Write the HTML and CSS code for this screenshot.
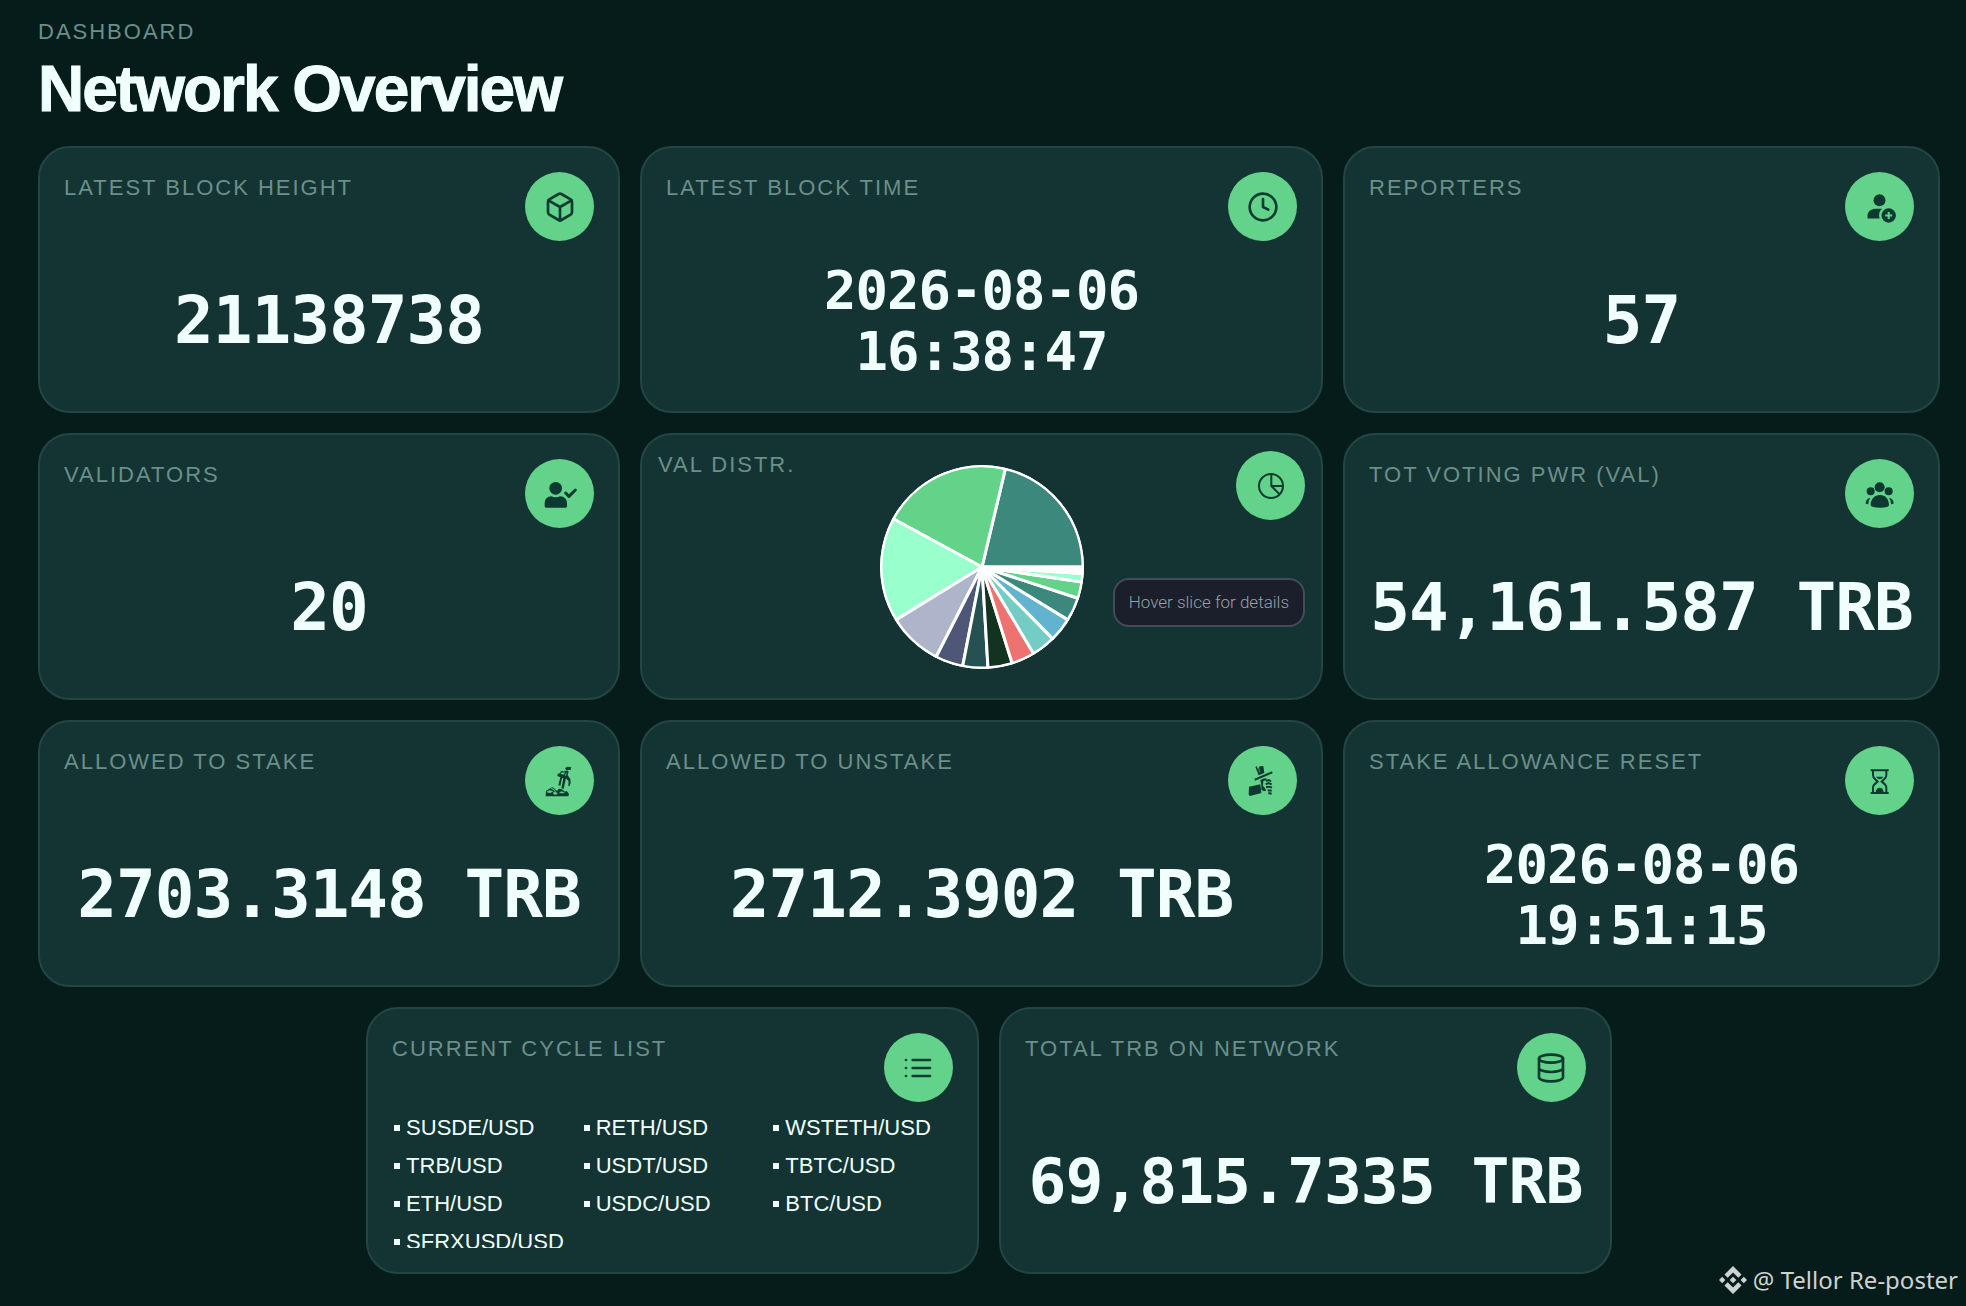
FILE: index.html
```html
<!DOCTYPE html>
<html lang="en">
<head>
<meta charset="utf-8">
<meta name="viewport" content="width=device-width, initial-scale=1">
<title>Network Overview</title>
<link rel="stylesheet" href="styles.css">
</head>
<body>
<main class="page">
  <header class="page-header">
    <p class="label">DASHBOARD</p>
    <h1 class="title">Network Overview</h1>
  </header>

  <div class="grid">
    <section class="card">
      <div class="card-head">
        <h2 class="label">LATEST BLOCK HEIGHT</h2>
        <span class="badge"><svg class="icon line" viewBox="0 0 24 24"><path d="M21 16V8a2 2 0 0 0-1-1.73l-7-4a2 2 0 0 0-2 0l-7 4A2 2 0 0 0 3 8v8a2 2 0 0 0 1 1.73l7 4a2 2 0 0 0 2 0l7-4A2 2 0 0 0 21 16z"/><path d="M3.27 6.96 12 12.01l8.73-5.05M12 22.08V12"/></svg></span>
      </div>
      <p class="value">21138738</p>
    </section>

    <section class="card">
      <div class="card-head">
        <h2 class="label">LATEST BLOCK TIME</h2>
        <span class="badge"><svg class="icon line" viewBox="0 0 24 24"><circle cx="12" cy="12" r="10"/><path d="M12 6v6l4 2"/></svg></span>
      </div>
      <p class="value date">2026-08-06<br>16:38:47</p>
    </section>

    <section class="card">
      <div class="card-head">
        <h2 class="label">REPORTERS</h2>
        <span class="badge"><svg class="icon wide" viewBox="0 0 36 36"><circle cx="17.5" cy="11.2" r="6"/><path d="M5.5 29.5v-3c0-4 4-6.7 9-6.7h5.5a9 9 0 0 0-2.300 9.700z"/><circle cx="26.700" cy="26.500" r="7.200"/><path class="cutout" d="M26.700 23v7M23.200 26.500h7"/></svg></span>
      </div>
      <p class="value">57</p>
    </section>

    <section class="card">
      <div class="card-head">
        <h2 class="label">VALIDATORS</h2>
        <span class="badge"><svg class="icon wide" viewBox="124 106 108 108"><circle cx="165" cy="143" r="19"/><path d="M132 197v-8c0-13 8-22 20-22 8 4 18 4 26 0 13 0 21 9 21 22v8q0 4-4 4h-59q-4 0-4-4z"/><path class="stroke thick" d="m195 157 10 10 19-19"/></svg></span>
      </div>
      <p class="value">20</p>
    </section>

    <section class="card chart-card">
      <div class="card-head">
        <h2 class="label">VAL DISTR.</h2>
        <span class="badge"><svg class="icon wide" viewBox="1209 111 108 108"><g class="stroke"><circle cx="1263" cy="165" r="36"/><path d="M1264 129v36h36M1264 165l25 25"/></g></svg></span>
      </div>
      <svg class="pie" viewBox="0 0 204 204" role="img" aria-label="Validator distribution">
        <defs><clipPath id="disc"><circle cx="102" cy="102" r="102"/></clipPath></defs>
        <g clip-path="url(#disc)">
          <circle cx="102" cy="102" r="102" fill="#fff"/>
          <path fill="#3c887c" d="M102 102L125.400 3.700A101 101 0 0 1 203 102z"/>
          <path fill="#64d38a" d="M102 102L13.200 53.800A101 101 0 0 1 125.400 3.700z"/>
          <path fill="#99ffcc" d="M102 102L16 154.900A101 101 0 0 1 13.200 53.800z"/>
          <path fill="#aeb4c9" d="M102 102L56.100 192A101 101 0 0 1 16 154.900z"/>
          <path fill="#4f5778" d="M102 102L82.700 201.100A101 101 0 0 1 56.100 192z"/>
          <path fill="#265153" d="M102 102L108 202.800A101 101 0 0 1 82.700 201.100z"/>
          <path fill="#12331f" d="M102 102L132.200 198.400A101 101 0 0 1 108 202.800z"/>
          <path fill="#ee726f" d="M102 102L153.700 188.800A101 101 0 0 1 132.200 198.400z"/>
          <path fill="#73cdc4" d="M102 102L172.900 173.900A101 101 0 0 1 153.700 188.800z"/>
          <path fill="#62b3cf" d="M102 102L188 154.900A101 101 0 0 1 172.900 173.900z"/>
          <path fill="#3c887c" d="M102 102L198.100 133.200A101 101 0 0 1 188 154.900z"/>
          <path fill="#64d38a" d="M102 102L201.900 117.100A101 101 0 0 1 198.100 133.200z"/>
          <path fill="#99ffcc" d="M102 102L202.800 108.400A101 101 0 0 1 201.900 117.100z"/>
          <path fill="#fff" d="M102 102L203 102A101 101 0 0 1 202.800 108.400z"/>
        </g>
      </svg>
      <p class="hint">Hover slice for details</p>
    </section>

    <section class="card">
      <div class="card-head">
        <h2 class="label">TOT VOTING PWR (VAL)</h2>
        <span class="badge"><svg class="icon wide" viewBox="124 106 108 108"><circle cx="177" cy="140" r="15"/><circle cx="150" cy="152" r="12"/><circle cx="204" cy="152" r="12"/><path d="M150 193c0-18 12-30 28-30s27 12 27 30q0 3-4 5-22 6-46 0-5-2-5-5zM149 171q-6 8-6 20-8 0-8-3 0-14 14-17zM205 171q6 8 6 20 8 0 8-3 0-14-14-17z"/></svg></span>
      </div>
      <p class="value">54,161.587 TRB</p>
    </section>

    <section class="card">
      <div class="card-head">
        <h2 class="label">ALLOWED TO STAKE</h2>
        <span class="badge"><svg class="icon wide" viewBox="124 97 108 108"><path d="M135 197l1-16 10-7 9-5 8 7 6 5 5-7 10 2 9 7 5-2 7 9-2 7z"/><path class="cut" d="M139 184l8-4 9 2-7 4zM158 186l7-2 5 6-10 1zM177 186l6-3 8 3-8 1zM150 172l8 3 7 9"/><path d="M193 112l8-4 11 2-3 9-6-2-5 4z"/><path d="M191 120l13 2-3 12 8 11 1 12-4 10-3-1 1-14-8-9-7 31-7-1 6-30-4-1-5 24-6-3 6-23-9-4 1-6 7-3 4-7 9 3-1 3-7-1-3 4 9 3z"/><path class="cut" d="M193 123l-3 8M197 127l-3 9"/></svg></span>
      </div>
      <p class="value">2703.3148 TRB</p>
    </section>

    <section class="card">
      <div class="card-head">
        <h2 class="label">ALLOWED TO UNSTAKE</h2>
        <span class="badge"><svg class="icon wide" viewBox="103 97 108 108"><path d="M134 109l4-2 4 8 5-8 11-1 3 21-17 7zM131 144l53-22 2 6-53 22z"/><path d="M115 168l34-7 3 26-34 9-4-4zM152 162l-3-13 8-5 10-1 1 5-10 3-1 15 6 6 3 8-6 2-8-5z"/><path class="cut" d="M144 112l3 13"/><g class="stroke"><path d="M166 151l8-3 7 4M165 161l8-4 10 4M166 170l9-2 9 3M171 179l12 1M173 187l10 2"/></g></svg></span>
      </div>
      <p class="value">2712.3902 TRB</p>
    </section>

    <section class="card">
      <div class="card-head">
        <h2 class="label">STAKE ALLOWANCE RESET</h2>
        <span class="badge"><svg class="icon wide" viewBox="124 97 108 108"><g class="stroke"><path d="M150 119h54M150 187h54M157 120v14c0 10 8 12 14 19-8 6-14 9-14 18v16M197 120v14c0 10-8 12-14 19 8 6 14 9 14 18v16"/></g><path d="M166 138h22q-3 7-11 8-8-1-11-8zM165 186c0-10 6-15 12-15s12 5 12 15z"/></svg></span>
      </div>
      <p class="value date">2026-08-06<br>19:51:15</p>
    </section>
  </div>

  <div class="grid pair">
    <section class="card">
      <div class="card-head">
        <h2 class="label">CURRENT CYCLE LIST</h2>
        <span class="badge"><svg class="icon line" viewBox="0 0 24 24"><path d="M8 6h13M8 12h13M8 18h13M3 6h.01M3 12h.01M3 18h.01"/></svg></span>
      </div>
      <ul class="cycle">
        <li>SUSDE/USD</li><li>RETH/USD</li><li>WSTETH/USD</li>
        <li>TRB/USD</li><li>USDT/USD</li><li>TBTC/USD</li>
        <li>ETH/USD</li><li>USDC/USD</li><li>BTC/USD</li>
        <li>SFRXUSD/USD</li>
      </ul>
    </section>

    <section class="card">
      <div class="card-head">
        <h2 class="label">TOTAL TRB ON NETWORK</h2>
        <span class="badge"><svg class="icon line" viewBox="0 0 24 24"><ellipse cx="12" cy="5" rx="9" ry="3"/><path d="M21 12c0 1.660-4 3-9 3s-9-1.340-9-3M3 5v14c0 1.660 4 3 9 3s9-1.340 9-3V5"/></svg></span>
      </div>
      <p class="value total">69,815.7335 TRB</p>
    </section>
  </div>

  <p class="credit">
    <svg class="credit-logo" viewBox="0 0 28 28"><path d="M14 0l8.500 8.500-3.200 3.200L14 6.400l-5.300 5.300-3.200-3.200zM14 28l8.500-8.500-3.200-3.200L14 21.600l-5.300-5.300-3.200 3.200zM14 10.700l3.300 3.300-3.300 3.300-3.300-3.300zM3.200 10.800L6.400 14l-3.200 3.200L0 14zM24.800 10.800L28 14l-3.200 3.200-3.200-3.200z"/></svg>
    <span>@ Tellor Re-poster</span>
  </p>
</main>
</body>
</html>
```
FILE: styles.css
```css
* {
  box-sizing: border-box;
  margin: 0;
  padding: 0;
}

body {
  background: #061c1a;
  color: #f0fffb;
  font-family: "Liberation Sans", Arial, sans-serif;
}

.page {
  position: relative;
  min-height: 100vh;
  padding: 18px 26px 32px 38px;
}

.page-header {
  display: grid;
  gap: 7px;
  margin-bottom: 21px;
}

.label {
  color: #6b8f8a;
  font-size: 22px;
  font-weight: 400;
  letter-spacing: 2px;
  line-height: 28px;
}

.title {
  font-size: 64px;
  font-weight: 700;
  letter-spacing: -2px;
  line-height: 72px;
  -webkit-text-stroke: 1px currentColor;
}

.grid {
  display: grid;
  grid-template-columns: 582fr 683fr 597fr;
  gap: 20px;
}

.pair {
  grid-template-columns: 1fr 1fr;
  width: 65.5%;
  margin: 20px auto 0;
}

.card {
  position: relative;
  display: flex;
  flex-direction: column;
  gap: 10px;
  min-width: 0;
  min-height: 267px;
  padding: 24px;
  background: #143433;
  border: 2px solid #234645;
  border-radius: 32px;
}

.card-head {
  display: flex;
  justify-content: space-between;
  align-items: flex-start;
}

.card-head .label {
  padding-top: 2px;
}

.badge {
  display: grid;
  place-items: center;
  flex: none;
  width: 69px;
  height: 69px;
  background: #63d38b;
  border-radius: 50%;
}

.icon {
  width: 32px;
  height: 32px;
  fill: #0c3a30;
}

.icon.wide {
  width: 36px;
  height: 36px;
}

.icon.line {
  fill: none;
  stroke: #0c3a30;
  stroke-width: 2;
  stroke-linecap: round;
  stroke-linejoin: round;
}

.stroke {
  fill: none;
  stroke: #0c3a30;
  stroke-width: 6;
}

.thick {
  stroke-width: 9;
  stroke-linecap: round;
  stroke-linejoin: round;
}

.cut {
  fill: #63d38b;
  stroke: #63d38b;
  stroke-width: 2;
}

.cutout {
  stroke: #63d38b;
  stroke-width: 2;
}

.value {
  flex: 1;
  display: grid;
  place-content: center;
  padding-top: 4px;
  font-family: "DejaVu Sans Mono", "Liberation Mono", monospace;
  font-size: 66px;
  font-weight: 700;
  letter-spacing: -1px;
  line-height: 80px;
  text-align: center;
  white-space: nowrap;
}

.date {
  display: block;
  font-size: 54px;
  line-height: 61px;
}

.total {
  font-size: 63px;
}

.chart-card {
  padding: 16px;
}

.chart-card .label {
  padding-top: 0;
}

.pie {
  position: absolute;
  inset: 0;
  width: 204px;
  height: 204px;
  margin: auto;
}

.pie path {
  stroke: #fff;
  stroke-width: 3;
  stroke-linejoin: round;
}

.hint {
  align-self: flex-end;
  margin-top: 48px;
  padding: 10px 14px;
  background: #1b1e2b;
  border: 2px solid #454b59;
  border-radius: 16px;
  color: #9a9fab;
  font-family: Roboto, "Liberation Sans", sans-serif;
  font-size: 17px;
  font-weight: 300;
  line-height: 25px;
}

.cycle {
  display: grid;
  grid-template-columns: repeat(3, minmax(0, 1fr));
  gap: 8px;
  height: 136px;
  padding-top: 1px;
  overflow: hidden;
  list-style: none;
  font-size: 22px;
  line-height: 30px;
  white-space: nowrap;
}

.cycle li {
  display: flex;
  align-items: center;
  gap: 6px;
  padding-left: 2px;
}

.cycle li::before {
  content: "";
  width: 6px;
  height: 6px;
  background: currentColor;
}

.credit {
  position: absolute;
  right: 8px;
  bottom: 10px;
  display: flex;
  align-items: center;
  gap: 6px;
  color: #cdd3d2;
  font-family: "Noto Sans", "Open Sans", sans-serif;
  font-size: 24px;
  line-height: 32px;
}

.credit-logo {
  width: 28px;
  height: 28px;
  fill: currentColor;
}

@media (max-width: 1500px) {
  .grid,
  .pair {
    grid-template-columns: 1fr;
    width: auto;
  }
}
```
